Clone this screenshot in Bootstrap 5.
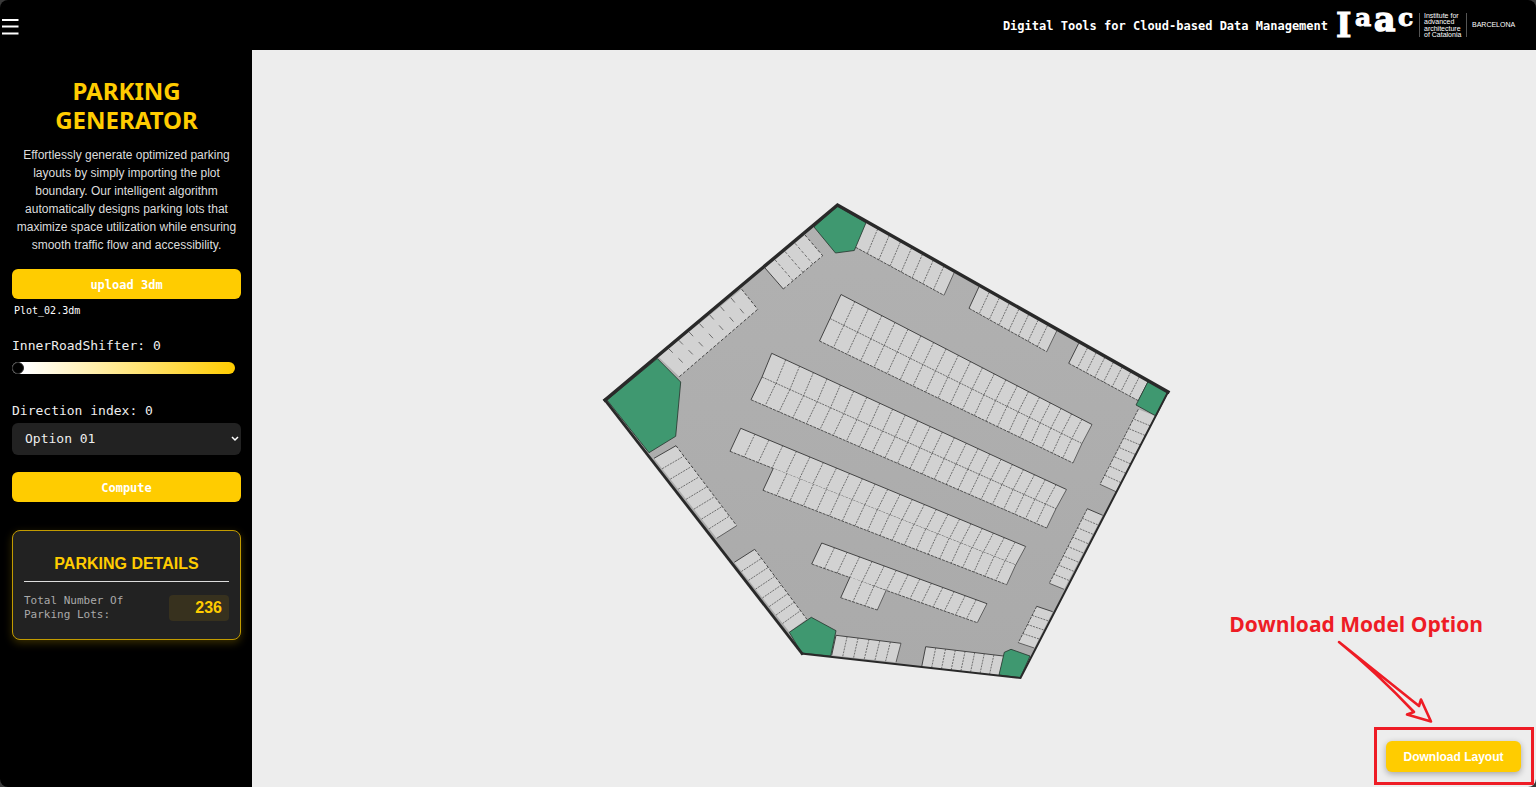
<!DOCTYPE html>
<html lang="en">
<head>
<meta charset="utf-8">
<meta name="viewport" content="width=device-width, initial-scale=1">
<title>Parking Generator</title>
<link href="https://cdn.jsdelivr.net/npm/bootstrap@5.3.0/dist/css/bootstrap.min.css" rel="stylesheet">
<style>
  :root { --gold: #ffcc00; --panel: #222; --red: #ee1c25; --mono: "DejaVu Sans Mono", monospace; --sans: "Liberation Sans", Arial, sans-serif; }
  html { background: #3a3a3a; }
  body { background: transparent; font-family: var(--sans); }
  .app-shell { min-height: 100vh; border-radius: 8px; overflow: hidden; background: #000; }
  .top-bar { height: 50px; padding: 2px 22px 0 0; font: 700 12px/20px var(--mono); color: #fff; }
  .menu-btn { width: 20px; height: 24px; }
  .side-panel { width: 252px; flex: none; padding: 26px 11px 12px 12px; color: #fff; }
  .app-title { font: 700 24px/29px "Noto Sans", sans-serif; color: var(--gold); margin-bottom: 12px; }
  .intro { font-size: 12px; line-height: 18px; color: #ddd; margin-bottom: 15px; }
  .btn-gold { --bs-btn-bg: var(--gold); --bs-btn-color: #fff; --bs-btn-hover-bg: #e6b800; --bs-btn-hover-color: #fff; --bs-btn-border-width: 0; --bs-btn-border-radius: 6px; --bs-btn-padding-y: 0; height: 30px; font: 700 12px/32px var(--mono); }
  .file-name { font: 10px/14px var(--mono); padding: 5px 2px 0; margin-bottom: 18px; color: #fff; }
  .field-label { font: 13px/20px var(--mono); color: #eee; }
  .road-range { appearance: none; -webkit-appearance: none; display: block; width: 223px; height: 12px; margin: 6px 0 27px; border-radius: 6px; background: linear-gradient(90deg, #fff 6%, var(--gold)); }
  .road-range::-webkit-slider-thumb { -webkit-appearance: none; width: 12px; height: 12px; border-radius: 50%; background: #000; border: 1px solid #2a2a2a; }
  .road-range::-moz-range-thumb { width: 10px; height: 10px; border-radius: 50%; background: #000; border: 1px solid #2a2a2a; }
  .option-select { height: 32px; margin: 2px 0 17px; border: 0; border-radius: 6px; padding: 0 24px 0 13px; color: #eee; font: 13px/32px var(--mono);
    background: var(--panel) url("data:image/svg+xml,%3Csvg xmlns='http://www.w3.org/2000/svg' viewBox='0 0 8 6'%3E%3Cpath d='M1 1l3 3 3-3' fill='none' stroke='%23fff' stroke-width='1.5'/%3E%3C/svg%3E") no-repeat right 2px center / 8px 6px; }
  .details-card { margin: 28px 0 0; padding: 21px 11px 17px 11px; background: var(--panel); border: 1px solid #c29b00; border-radius: 8px; box-shadow: 0 3px 8px rgba(255,204,0,.22); }
  .details-title { font: 700 16px/24px var(--sans); color: var(--gold); padding-bottom: 5px; margin-bottom: 12px; border-bottom: 1px solid #ddd; }
  .lot-label { font: 11px/14px var(--mono); color: #aaa; }
  .lot-count { width: 60px; padding-right: 7px; border-radius: 4px; background: #37311e; color: var(--gold); font: 700 16px/26px var(--sans); }
  .viewer { background: #ededed; min-width: 0; }
  .callout-stack { position: absolute; right: 2px; bottom: 2px; }
  .callout-text { font: 700 21px/28px "Open Sans", sans-serif; color: var(--red); margin-right: 51px; }
  .callout-arrow { width: 98px; height: 84px; margin: 2px 99px 3px 0; }
  .callout-frame { border: 3px solid var(--red); padding: 11px 10px 10px 9px; }
  .btn-download { width: 135px; height: 31px; font: 700 12px/32px var(--sans); box-shadow: 0 2px 6px rgba(0,0,0,.3); }
</style>
</head>
<body>
<div class="app-shell d-flex flex-column">
  <header class="top-bar d-flex align-items-center">
    <button class="menu-btn btn p-0 border-0 d-flex align-items-center" type="button" aria-label="Menu">
      <svg width="20" height="20" viewBox="0 0 20 20"><path d="M2 4h16.500M2 10.500h16.500M2 17.500h16.500" stroke="#fff" stroke-width="2"/></svg>
    </button>
    <span class="ms-auto me-2">Digital Tools for Cloud-based Data Management</span>
    <svg class="overflow-visible" width="178" height="34" viewBox="1336 9 178 34" fill="#fff" role="img" aria-label="IAAC Barcelona">
      <g font-family="'DejaVu Serif', serif" font-weight="700" stroke="#fff">
        <text x="1336" y="37" font-size="33" stroke-width="1">I</text>
        <text x="1355" y="26" font-size="25" stroke-width="1">a</text>
        <text x="1374" y="31" font-size="33" stroke-width="1.500">a</text>
        <text x="1398" y="26" font-size="25" stroke-width="1">c</text>
      </g>
      <path d="M1419.500 13v24M1466.500 13v24" stroke="#555"/>
      <g font-family="'Liberation Sans', sans-serif" font-weight="400" font-size="7">
        <text x="1424" y="18">Institute for</text><text x="1424" y="24">advanced</text><text x="1424" y="31">architecture</text><text x="1424" y="37">of Catalonia</text>
        <text x="1472" y="27">BARCELONA</text>
      </g>
    </svg>
  </header>
  <div class="d-flex flex-grow-1">
    <aside class="side-panel">
      <h1 class="app-title text-center">PARKING<br>GENERATOR</h1>
      <p class="intro text-center">Effortlessly generate optimized parking<br>layouts by simply importing the plot<br>boundary. Our intelligent algorithm<br>automatically designs parking lots that<br>maximize space utilization while ensuring<br>smooth traffic flow and accessibility.</p>
      <button class="btn btn-gold w-100" type="button">upload 3dm</button>
      <div class="file-name">Plot_02.3dm</div>
      <label class="field-label d-block" for="road">InnerRoadShifter: 0</label>
      <input class="road-range" id="road" type="range" min="0" max="10" value="0">
      <label class="field-label d-block" for="direction">Direction index: 0</label>
      <select class="form-select option-select" id="direction"><option>Option 01</option><option>Option 02</option></select>
      <button class="btn btn-gold w-100" type="button">Compute</button>
      <section class="details-card">
        <h2 class="details-title text-center">PARKING DETAILS</h2>
        <div class="d-flex justify-content-between align-items-center">
          <div class="lot-label">Total Number Of<br>Parking Lots:</div>
          <div class="lot-count text-end">236</div>
        </div>
      </section>
    </aside>
    <main class="viewer flex-grow-1 position-relative">
      <svg class="d-block w-100 h-100" viewBox="252 50 1284 737" role="img" aria-label="Parking layout plan">
        <defs><linearGradient id="ground" x1="0" y1="0" x2="0" y2="1"><stop offset="0" stop-color="#b1b1b1"/><stop offset="1" stop-color="#aaa"/></linearGradient></defs>
        <path fill="url(#ground)" d="M837.500 205L1168 392 1020.500 678 802 653.500 605 400z"/>
        <g id="stalls" stroke-linecap="butt"></g>
        <g fill="#3f9870" stroke="#25332c" stroke-width=".8">
          <path d="M837.500 206L866 222.700 854.300 250.500 835.500 253 814 227z"/>
          <path d="M607 400L657.300 358.500 680.700 382 675.700 436.300 649 452.700z"/>
          <path d="M1148 381.700L1168 392 1156 416 1136 405z"/>
          <path d="M789.300 632.300L811.300 617.300 836 630.700 830.700 656 801.700 653z"/>
          <path d="M1004.300 652.300L1011 649.300 1030 656 1020.300 677.700 999 675z"/>
        </g>
        <g fill="none" stroke="#292929" stroke-linecap="square">
          <path d="M605 400L837.500 205 1168 392" stroke-width="3.400" stroke-linejoin="miter"/>
          <path d="M605 400L802 653.500" stroke-width="2.800"/>
          <path d="M1168 392L1020.500 678 802 653.500" stroke-width="2"/>
        </g>
      </svg>
      <div class="callout-stack d-flex flex-column align-items-end">
        <div class="callout-text">Download Model Option</div>
        <svg class="callout-arrow" viewBox="1337 639 98 84" fill="none" stroke="#ee1c25" stroke-width="2.600" stroke-linejoin="round"><path d="M1339 641L1419 705 1421 698.500 1431 720.500 1407 713.500 1414 711Q1376 671 1339 641z"/></svg>
        <div class="callout-frame"><button class="btn btn-gold btn-download p-0 d-block" type="button">Download Layout</button></div>
      </div>
    </main>
  </div>
</div>
<script>
// Each bay strip: corners a-b along one long side, d-c along the other, n stalls, and the sides to outline.
// k is the foreshortening of stall widths from a towards b.
const strips = [
  {q:[841,294.5,1092,424.5,1082,443.5,830,318.5],n:21,k:.16,s:'tse'},
  {q:[830,318.5,1082,443.5,1073,463,819.5,341],n:21,k:.16,s:'mbse'},
  {q:[771.7,353.3,1066.5,489.5,1056,508.7,762,377],n:24,k:.15,s:'tse'},
  {q:[762,377,1056,508.7,1046.7,528,751,399.7],n:24,k:.15,s:'mbse'},
  {q:[740.7,428.3,1025.7,546.5,1015.7,565,730,451.3],n:23,k:.15,s:'tbse'},
  {q:[773.3,468.3,1015.7,565,1006.7,584.7,763,490.3],n:20,k:.12,s:'bse'},
  {q:[821.7,543,987,603.7,977.3,622.7,811.7,564],n:14,k:.09,s:'tbse'},
  {q:[850,577,886,590.7,877.3,610,840.7,597.7],n:3,k:0,s:'bse'},
  {q:[866,222.7,954.3,272.3,944,295.3,855.7,247.3],n:8,k:.06,s:'be'},
  {q:[979,286.7,1056.7,331,1046.7,351.7,969,308.3],n:8,k:.05,s:'bse'},
  {q:[1078.7,343.3,1148,381.7,1138.3,400.7,1068.7,363.3],n:8,k:0,s:'bse'},
  {q:[1155,416,1116,491.7,1100,484.3,1138.3,409.3],n:8,k:.03,s:'be'},
  {q:[1102.7,515.3,1064,589.3,1049.3,583.3,1087.3,508.7],n:8,k:.03,s:'bse'},
  {q:[1052.7,611.7,1034.3,648,1018.3,642.7,1036.7,606.3],n:4,k:0,s:'bse'},
  {q:[836,635.3,901,643.3,896,662.3,831.7,655.3],n:6,k:.03,s:'tse'},
  {q:[925.7,646.7,1003.3,656,999,675,921.7,666.7],n:8,k:.03,s:'ts'},
  {q:[654,458.3,716.7,538.3,736.7,525.7,676,445.7],n:8,k:.05,s:'Bse'},
  {q:[734.3,562.3,789.3,631.7,806.7,619,754.7,549.3],n:8,k:.05,s:'Bs'},
  {q:[765,268,805,235,822.7,255.7,783.3,289],n:4,k:0,s:'BsE',dash:'3 2'},
  {q:[658.3,356.7,741.7,289.3,757.7,309.3,679.3,376.7],n:8,k:-.03,s:'BE',dash:'6 8'}
];
const stalls = document.getElementById('stalls');
const mix = (p, q, t) => [(p[0] + (q[0] - p[0]) * t).toFixed(1), (p[1] + (q[1] - p[1]) * t).toFixed(1)];
const seg = (p, q) => 'M' + p + 'L' + q;
const add = (d, attrs) => {
  const el = document.createElementNS('http://www.w3.org/2000/svg', 'path');
  el.setAttribute('d', d);
  for (const key in attrs) el.setAttribute(key, attrs[key]);
  stalls.append(el);
};
for (const {q, n, k, s, dash} of strips) {
  const a = q.slice(0, 2), b = q.slice(2, 4), c = q.slice(4, 6), d = q.slice(6, 8);
  add('M' + [a, b, c, d].join('L') + 'z', {fill: '#d2d2d2'});
  let inner = '';
  for (let i = 1; i < n; i++) {
    const u = i / n, t = u + k * u * (1 - u);
    inner += seg(mix(a, b, t), mix(d, c, t));
  }
  add(inner, {stroke: '#555', 'stroke-width': .8, 'stroke-dasharray': dash || '2 1'});
  if (s.includes('t')) add(seg(a, b), {stroke: '#444', 'stroke-width': 1});
  if (s.includes('m')) add(seg(a, b), {stroke: '#555', 'stroke-width': .8, 'stroke-dasharray': '2 1'});
  if (s.includes('b')) add(seg(d, c), {stroke: '#444', 'stroke-width': .9, 'stroke-dasharray': '3 1'});
  if (s.includes('B')) add(seg(d, c), {stroke: '#444', 'stroke-width': 1, 'stroke-dasharray': '3 2'});
  if (s.includes('s')) add(seg(a, d), {stroke: '#444', 'stroke-width': 1});
  if (s.includes('e')) add(seg(b, c), {stroke: '#555', 'stroke-width': .9});
  if (s.includes('E')) add(seg(b, c), {stroke: '#444', 'stroke-width': 1, 'stroke-dasharray': '3 2'});
}
</script>
<script src="https://cdn.jsdelivr.net/npm/bootstrap@5.3.0/dist/js/bootstrap.bundle.min.js"></script>
</body>
</html>
